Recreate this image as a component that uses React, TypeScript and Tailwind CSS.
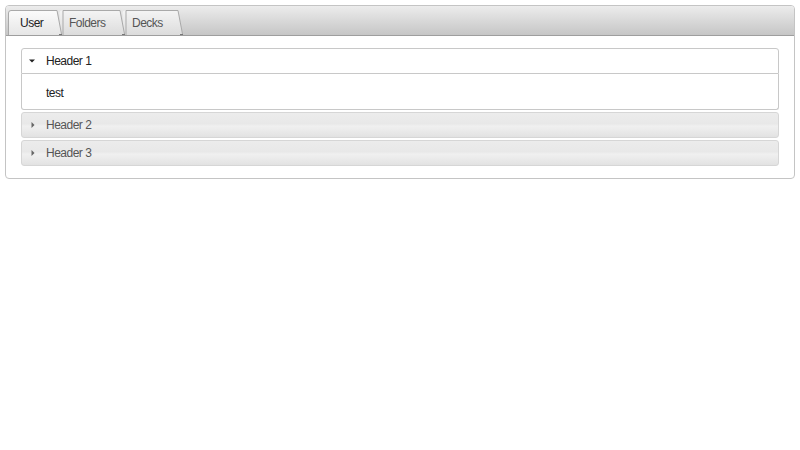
import React from "react";

function Tab({ label, active, z, w, wc, pl }: { label: string; active?: boolean; z: string; w: number; wc: string; pl: string }) {
  return (
    <div className={`relative h-[25px] ${wc} ${z} ${active ? "" : "-ml-[4px]"}`}>
      <svg className="absolute inset-0" width={w} height={25} viewBox={`0 0 ${w} 25`}>
        <defs>
          <linearGradient id={`g-${label}`} x1="0" y1="0" x2="0" y2="1">
            <stop offset="0" stopColor={active ? "#fbfbfb" : "#f4f4f4"} />
            <stop offset="1" stopColor={active ? "#e6e6e6" : "#dcdcdc"} />
          </linearGradient>
        </defs>
        <path
          d={`M0.5 25 L0.5 3 Q0.5 0.5 3 0.5 L${w - 6} 0.5 L${w - 1.5} 25 Z`}
          fill={`url(#g-${label})`}
          stroke="none"
        />
        <path
          d={`M${active ? 0.5 : 4} 25 ${active ? "L0.5 3 Q0.5 0.5 3 0.5" : `L4 0.5`} L${w - 6} 0.5 L${w - 1.5} 24`}
          fill="none"
          stroke="#a9a9a9"
          strokeWidth="1"
        />
        <path d={`M${w - 4} 24.5 L${w - 1} 24.5`} stroke="#777" strokeWidth="1" />
      </svg>
      <span
        className={`relative flex h-full items-center text-[12px] tracking-[-0.5px] ${pl} ${active ? "text-[#222]" : "text-[#555]"}`}
      >
        {label}
      </span>
    </div>
  );
}

function Caret({ open }: { open?: boolean }) {
  return open ? (
    <svg width="6" height="4" viewBox="0 0 6 4" className="ml-[7px] mr-[11px]">
      <path d="M0 0.5 L6 0.5 L3 3.5 Z" fill="#222" />
    </svg>
  ) : (
    <svg width="4" height="6" viewBox="0 0 4 6" className="ml-[9px] mr-[11px]">
      <path d="M0.5 0 L3.5 3 L0.5 6 Z" fill="#666" />
    </svg>
  );
}

const collapsed =
  "mt-[2px] flex h-[26px] items-center rounded-[3px] border border-[#d6d6d6] bg-[linear-gradient(to_bottom,#ececec_0%,#e8e8e8_45%,#f0f0f0_55%,#e2e2e2_100%)] text-[12px] tracking-[-0.5px] text-[#555]";

export default function App() {
  return (
    <div className="h-[450px] w-[800px] bg-white p-[5px] font-['Liberation_Sans',Arial,sans-serif]">
      <div className="rounded-[4px] border border-[#c4c4c4] bg-white">
        <div className="flex h-[30px] items-end rounded-t-[3px] border-b border-[#9e9e9e] bg-gradient-to-b from-[#ececec] to-[#c6c6c6] pl-[2px]">
          <Tab label="User" active z="z-30" w={55} wc="w-[55px]" pl="pl-[12px]" />
          <Tab label="Folders" z="z-20" w={67} wc="w-[67px]" pl="pl-[10px]" />
          <Tab label="Decks" z="z-10" w={62} wc="w-[62px]" pl="pl-[10px]" />
        </div>
        <div className="px-[15px] pb-[12px] pt-[12px]">
          <div className="flex h-[26px] items-center rounded-t-[3px] border border-[#c8c8c8] bg-white text-[12px] tracking-[-0.5px] text-[#222]">
            <Caret open />
            <span>Header 1</span>
          </div>
          <div className="h-[36px] rounded-b-[3px] border-x border-b border-[#c8c8c8] bg-white pl-[24px] pt-[10px] text-[12px] tracking-[-0.5px] text-[#222]">
            test
          </div>
          <div className={collapsed}>
            <Caret />
            <span>Header 2</span>
          </div>
          <div className={collapsed}>
            <Caret />
            <span>Header 3</span>
          </div>
        </div>
      </div>
    </div>
  );
}
